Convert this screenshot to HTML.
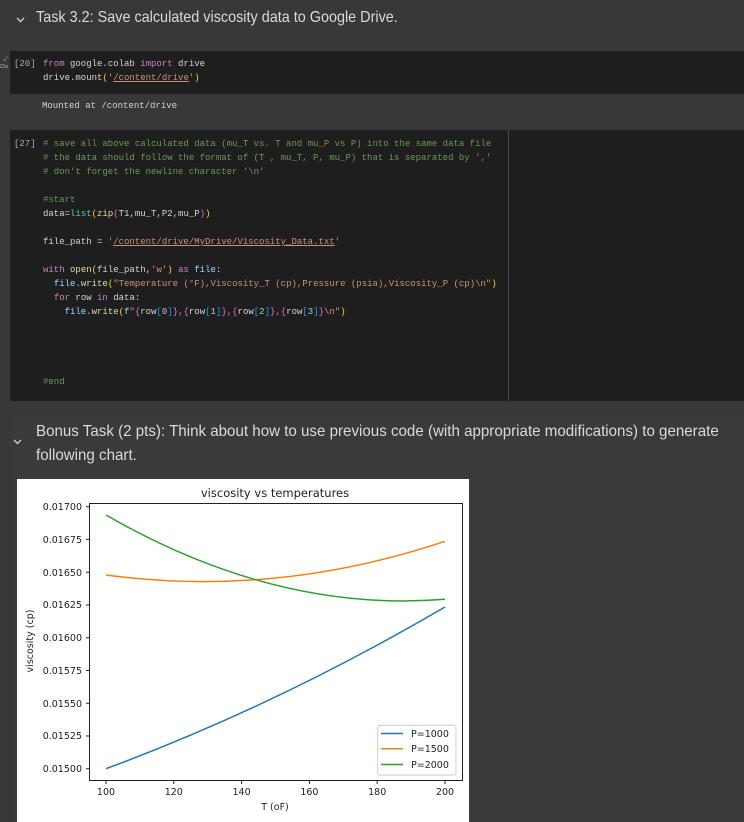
<!DOCTYPE html>
<html><head><meta charset="utf-8"><style>
body{margin:0;width:744px;height:822px;background:#383838;position:relative;overflow:hidden;font-family:"Liberation Sans",sans-serif}
.a{position:absolute;white-space:pre}
.code{font-family:"Liberation Mono",monospace;font-size:9px;color:#d4d4d4;line-height:14px}
.cell{position:absolute;background:#1e1e1e;left:10px;right:0}
.c{color:#6a9955}.k{color:#c586c0}.s{color:#ce9178}.f{color:#dcdcaa}.v{color:#9cdcfe}.y{color:#ffd700}.p{color:#da70d6}.b{color:#179fff}.n{color:#b5cea8}.t{color:#4ec9b0}
.h{color:#dadada}
.u{text-decoration:underline;text-decoration-color:#ce9178}
</style></head><body>
<svg class="a" style="left:16px;top:17px" width="9" height="6"><path d="M1 1L4.5 4.5L8 1" fill="none" stroke="#ccc" stroke-width="1.4"/></svg>
<div class="a h" style="left:36px;top:9px;font-size:16px;transform:scaleX(0.9);transform-origin:0 0">Task 3.2: Save calculated viscosity data to Google Drive.</div>

<div class="cell" style="top:51px;height:43px"></div>
<div class="a" style="left:2px;top:54px;color:#3fb950;font-size:9px">✓</div>
<div class="a" style="left:0px;top:64px;color:#bbb;font-size:5px">21s</div>
<div class="a code" style="left:14px;top:57px;color:#aaa">[20]</div>
<div class="a code" style="left:43px;top:57px"><span class="k">from</span> google.colab <span class="k">import</span> drive
drive.mount<span class="y">(</span><span class="s">'<span class="u">/content/drive</span>'</span><span class="y">)</span></div>
<div class="a code" style="left:42px;top:99px">Mounted at /content/drive</div>

<div class="cell" style="top:130px;height:271px"></div>
<div class="a" style="left:508px;top:130px;width:1px;height:271px;background:#4a4a4a"></div>
<div class="a code" style="left:14px;top:137px;color:#aaa">[27]</div>
<div class="a code" style="left:43px;top:137px"><span class="c"># save all above calculated data (mu_T vs. T and mu_P vs P) into the same data file
# the data should follow the format of (T , mu_T, P, mu_P) that is separated by ','
# don't forget the newline character '\n'

#start</span>
data=<span class="t">list</span><span class="y">(</span><span class="f">zip</span><span class="p">(</span>T1,mu_T,P2,mu_P<span class="p">)</span><span class="y">)</span>

file_path = <span class="s">'<span class="u">/content/drive/MyDrive/Viscosity_Data.txt</span>'</span>

<span class="k">with</span> <span class="f">open</span><span class="y">(</span>file_path,<span class="s">'w'</span><span class="y">)</span> <span class="k">as</span> <span class="v">file</span>:
  <span class="v">file</span>.<span class="f">write</span><span class="y">(</span><span class="s">"Temperature (°F),Viscosity_T (cp),Pressure (psia),Viscosity_P (cp)\n"</span><span class="y">)</span>
  <span class="k">for</span> row <span class="k">in</span> data:
    <span class="v">file</span>.<span class="f">write</span><span class="y">(</span><span class="v">f</span><span class="s">"</span><span class="p">{</span>row<span class="b">[</span><span class="n">0</span><span class="b">]</span><span class="p">}</span><span class="s">,</span><span class="p">{</span>row<span class="b">[</span><span class="n">1</span><span class="b">]</span><span class="p">}</span><span class="s">,</span><span class="p">{</span>row<span class="b">[</span><span class="n">2</span><span class="b">]</span><span class="p">}</span><span class="s">,</span><span class="p">{</span>row<span class="b">[</span><span class="n">3</span><span class="b">]</span><span class="p">}</span><span class="s">\n"</span><span class="y">)</span>




<span class="c">#end</span></div>

<div class="a" style="left:10px;top:410px;right:0;height:412px;background:#3a3a3a"></div>
<svg class="a" style="left:13px;top:439px" width="9" height="6"><path d="M1 1L4.5 4.5L8 1" fill="none" stroke="#ccc" stroke-width="1.4"/></svg>
<div class="a h" style="left:36px;top:420px;line-height:24px;font-size:16px;transform:scaleX(0.945);transform-origin:0 0">Bonus Task (2 pts): Think about how to use previous code (with appropriate modifications) to generate
following chart.</div>

<div class="a" style="left:17px;top:479px;width:452px;height:343px;background:#fff"></div>
<svg class="a" style="left:0;top:0" width="744" height="822" viewBox="0 0 744 822" font-family="DejaVu Sans, sans-serif" font-size="9.5" fill="#222">
<rect x="89.5" y="503.5" width="373" height="277" fill="none" stroke="#222" stroke-width="1"/>
<text x="275" y="497" text-anchor="middle" font-size="11.5">viscosity vs temperatures</text>
<g text-anchor="end">
<text x="82" y="510">0.01700</text><text x="82" y="543">0.01675</text><text x="82" y="576">0.01650</text><text x="82" y="608">0.01625</text><text x="82" y="641">0.01600</text><text x="82" y="674">0.01575</text><text x="82" y="707">0.01550</text><text x="82" y="739">0.01525</text><text x="82" y="772">0.01500</text>
</g>
<g stroke="#222"><path d="M86 506.7h3M86 539.4h3M86 572.2h3M86 605h3M86 637.7h3M86 670.5h3M86 703.2h3M86 736h3M86 768.7h3M106 781v3M173.8 781v3M241.6 781v3M309.4 781v3M377.2 781v3M445 781v3"/></g>
<g text-anchor="middle"><text x="106" y="795">100</text><text x="173.8" y="795">120</text><text x="241.6" y="795">140</text><text x="309.4" y="795">160</text><text x="377.2" y="795">180</text><text x="445" y="795">200</text>
<text x="275" y="810">T (oF)</text>
<text transform="translate(33 641) rotate(-90)">viscosity (cp)</text></g>
<g fill="none" stroke-width="1.5">
<path stroke="#1f77b4" d="M106 768.7 Q275.5 706 445 607"/>
<path stroke="#ff7f0e" d="M106 575 Q275.5 597.9 445 541.3"/>
<path stroke="#2ca02c" d="M106 515 Q275.5 612.9 445 599.3"/>
</g>
<rect x="377.7" y="725.3" width="78.3" height="49.7" rx="2" fill="#fff" stroke="#ccc"/>
<path d="M381 733.5h22" stroke="#1f77b4" stroke-width="1.5"/><path d="M381 748.7h22" stroke="#ff7f0e" stroke-width="1.5"/><path d="M381 764.5h22" stroke="#2ca02c" stroke-width="1.5"/>
<text x="411" y="737">P=1000</text><text x="411" y="752">P=1500</text><text x="411" y="768">P=2000</text>
</svg>
</body></html>
